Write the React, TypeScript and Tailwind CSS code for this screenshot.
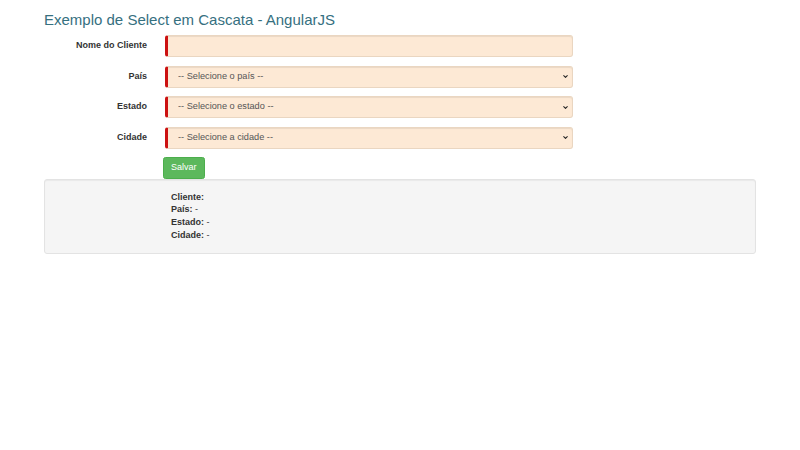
import { ChevronDown } from "lucide-react";

const fields = [
  { label: "País", placeholder: "-- Selecione o país --" },
  { label: "Estado", placeholder: "-- Selecione o estado --" },
  { label: "Cidade", placeholder: "-- Selecione a cidade --" },
];

const inputBox =
  "h-[22px] w-[408px] rounded-[3px] border border-[#ead6c1] border-l-[3px] border-l-[#cc1111] bg-[#fde9d5] text-[9.2px] text-[#555] shadow-[inset_0_1px_1px_rgba(0,0,0,0.075)]";

export default function App() {
  return (
    <div className="min-h-[450px] w-[800px] bg-white pl-[44px] font-['Liberation_Sans',Arial,sans-serif] text-[9px] text-[#333]">
      <h3 className="pt-[11px] text-[15px] leading-[18px] text-[#36707f]">
        Exemplo de Select em Cascata - AngularJS
      </h3>

      <form className="mt-[6px] flex flex-col gap-[8.5px]">
        <div className="flex items-center">
          <label className="w-[103px] text-right font-bold">Nome do Cliente</label>
          <input type="text" className={`${inputBox} ml-[18px] px-[9px] outline-none`} />
        </div>
        {fields.map((f) => (
          <div key={f.label} className="flex items-center">
            <label className="w-[103px] text-right font-bold">{f.label}</label>
            <div className="relative ml-[18px]">
              <select className={`${inputBox} appearance-none pl-[10px] pr-6 outline-none`}>
                <option>{f.placeholder}</option>
              </select>
              <ChevronDown
                className="pointer-events-none absolute right-[4px] top-[7.5px] size-[7px] text-[#222]"
                strokeWidth={3.5}
              />
            </div>
          </div>
        ))}
        <div className="flex pl-[119px]">
          <button
            type="button"
            className="h-[21.5px] rounded-[2.5px] border border-[#4cae4c] bg-[#5cb85c] px-[7px] text-[9px] text-white"
          >
            Salvar
          </button>
        </div>
      </form>

      <div className="mr-[44px] h-[75px] rounded-[3px] border border-[#e3e3e3] bg-[#f5f5f5] pl-[126px] pt-[11px] leading-[12.8px] shadow-[inset_0_1px_1px_rgba(0,0,0,0.05)]">
        <div>
          <b>Cliente:</b>
        </div>
        <div>
          <b>País:</b> -
        </div>
        <div>
          <b>Estado:</b> -
        </div>
        <div>
          <b>Cidade:</b> -
        </div>
      </div>
    </div>
  );
}
